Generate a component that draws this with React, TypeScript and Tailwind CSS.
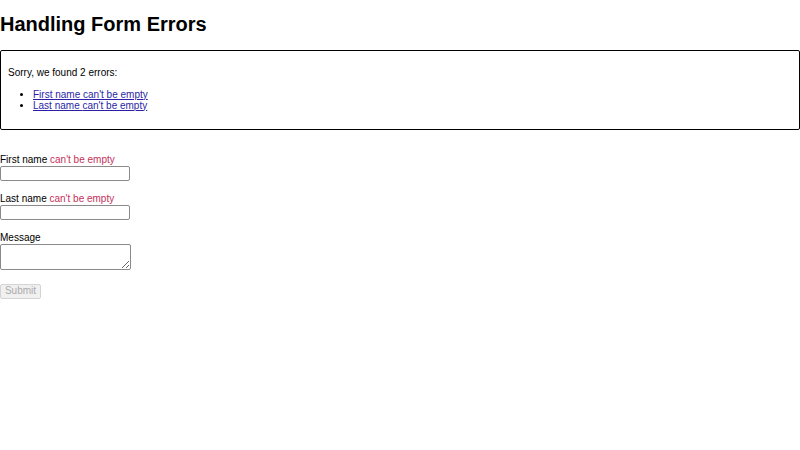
import { useState } from "react";

type Errors = { firstName?: string; lastName?: string };

export default function App() {
  const [firstName, setFirstName] = useState("");
  const [lastName, setLastName] = useState("");
  const [message, setMessage] = useState("");

  const errors: Errors = {};
  if (!firstName.trim()) errors.firstName = "can't be empty";
  if (!lastName.trim()) errors.lastName = "can't be empty";
  const count = Object.keys(errors).length;

  return (
    <div className="bg-white font-['Liberation_Sans',Arial,sans-serif] text-[10px] leading-[1.15] text-black">
      <h1 className="mt-[13px] mb-[14px] text-[20px] font-bold leading-[1.15]">Handling Form Errors</h1>

      {count > 0 && (
        <div className="rounded-[2px] border border-black pr-2 pl-[7px] pt-[6px] pb-[9px]">
          <p className="my-[10px]">Sorry, we found {count} errors:</p>
          <ul className="my-[9px] list-disc pl-[25px] leading-[11px]">
            {errors.firstName && (
              <li>
                <a href="#first-name" className="text-[#2a1fa6] underline">
                  First name {errors.firstName}
                </a>
              </li>
            )}
            {errors.lastName && (
              <li>
                <a href="#last-name" className="text-[#2a1fa6] underline">
                  Last name {errors.lastName}
                </a>
              </li>
            )}
          </ul>
        </div>
      )}

      <form className="mt-[23px]" onSubmit={(e) => e.preventDefault()}>
        <div className="mb-[11px]">
          <label htmlFor="first-name" className="block leading-[13px]">
            First name {errors.firstName && <span className="text-[#c3325a]">{errors.firstName}</span>}
          </label>
          <input
            id="first-name"
            value={firstName}
            onChange={(e) => setFirstName(e.target.value)}
            className="block h-[15px] w-[130px] rounded-[2px] border border-[#8a8a8a] px-[2px] text-[10px]"
          />
        </div>
        <div className="mb-[11px]">
          <label htmlFor="last-name" className="block leading-[13px]">
            Last name {errors.lastName && <span className="text-[#c3325a]">{errors.lastName}</span>}
          </label>
          <input
            id="last-name"
            value={lastName}
            onChange={(e) => setLastName(e.target.value)}
            className="block h-[15px] w-[130px] rounded-[2px] border border-[#8a8a8a] px-[2px] text-[10px]"
          />
        </div>
        <div className="mb-[14px]">
          <label htmlFor="message" className="block leading-[13px]">
            Message
          </label>
          <textarea
            id="message"
            value={message}
            onChange={(e) => setMessage(e.target.value)}
            className="block h-[26px] w-[131px] rounded-[2px] border border-[#8a8a8a] px-[2px] text-[10px]"
          />
        </div>
        <button
          type="submit"
          disabled={count > 0}
          className="h-[15px] w-[41px] rounded-[2px] border border-[#d4d4d4] bg-[#f0f0f0] text-[10px] leading-none text-[#ababab]"
        >
          Submit
        </button>
      </form>
    </div>
  );
}
